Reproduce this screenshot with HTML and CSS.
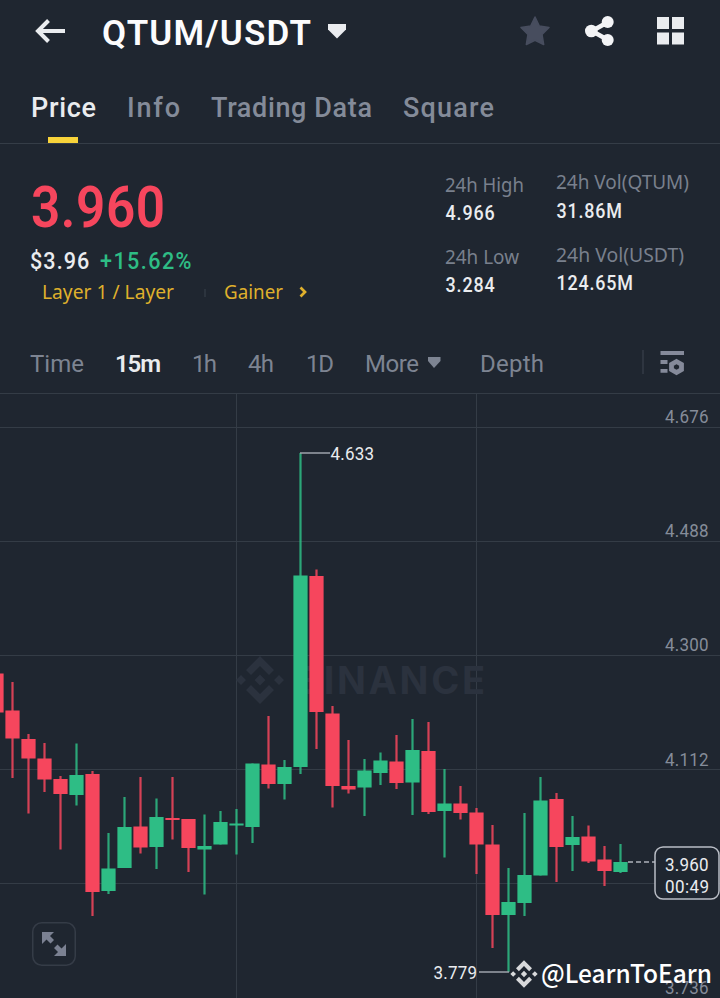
FILE: index.html
```html
<!DOCTYPE html>
<html lang="en">
<head>
<meta charset="utf-8">
<title>QTUM/USDT</title>
<link rel="stylesheet" href="styles.css">
</head>
<body>
<header class="topbar">
  <svg class="back" width="32" height="28" viewBox="0 0 32 28"><path d="M31 14H4M14.500 3.500 4 14l10.500 10.500" fill="none" stroke="#eaecef" stroke-width="4"/></svg>
  <h1 class="pair"><svg width="210" height="50"><text x="0" y="33" textLength="209">QTUM/USDT</text></svg></h1>
  <svg class="caret" width="18" height="15" viewBox="0 0 18 15"><path d="M0 0h18v5.500L9 14.500 0 5.500z" fill="#eaecef"/></svg>
  <svg class="star" width="30" height="32" viewBox="0 0 30 32"><path d="M15 2l4.300 9 9.700 1.400-7 7 1.700 10.100L15 25.300l-8.700 4.200L8 19.400l-7-7L10.700 11z" fill="#474d5e" stroke="#474d5e" stroke-width="1.500" stroke-linejoin="round"/></svg>
  <svg class="share" width="30" height="32" viewBox="0 0 30 32"><path d="M23 7 7 16l16 9" fill="none" stroke="#f3f4f6" stroke-width="4.500"/><circle cx="22.700" cy="7" r="6" fill="#f3f4f6"/><circle cx="6.300" cy="16" r="6.300" fill="#f3f4f6"/><circle cx="22.700" cy="25" r="6" fill="#f3f4f6"/></svg>
  <svg class="grid-icon" width="28" height="28" viewBox="0 0 28 28"><path d="M0 0h12v12H0zM15 0h12v12H15zM0 15.500h12v12H0zM15 15.500h12v12H15z" fill="#eaecef"/></svg>
</header>
<nav class="tabs">
  <svg width="720" height="60">
    <text class="on" x="31" y="32" textLength="65">Price</text>
    <text x="127" y="32" textLength="53">Info</text>
    <text x="211" y="32" textLength="161">Trading Data</text>
    <text x="403" y="32" textLength="91">Square</text>
  </svg>
</nav>
<section class="summary">
  <svg width="720" height="196">
    <text class="price" transform="translate(31 83) scale(.9 1)" textLength="149">3.960</text>
    <text class="usd" transform="translate(30 125) scale(.92 1)" textLength="64.500">$3.96</text>
    <text class="gain" transform="translate(100 125) scale(.92 1)" textLength="99.500">+15.62%</text>
    <text class="tag" x="42" y="155" textLength="132" lengthAdjust="spacingAndGlyphs">Layer 1 / Layer</text>
    <path d="M205 145v8" stroke="#3a424d"/>
    <text class="tag" x="224" y="155" textLength="59" lengthAdjust="spacingAndGlyphs">Gainer</text>
    <path d="M300.500 143.500 305 148l-4.500 4.500" fill="none" stroke="#dfb02c" stroke-width="2.700"/>
    <g class="label">
      <text x="445" y="48" textLength="79" lengthAdjust="spacingAndGlyphs">24h High</text>
      <text x="445" y="120" textLength="74" lengthAdjust="spacingAndGlyphs">24h Low</text>
      <text x="556" y="45" textLength="133" lengthAdjust="spacingAndGlyphs">24h Vol(QTUM)</text>
      <text x="556" y="118" textLength="128" lengthAdjust="spacingAndGlyphs">24h Vol(USDT)</text>
    </g>
    <g class="value">
      <text transform="translate(445.500 76) scale(.92 1)" textLength="53.500">4.966</text>
      <text transform="translate(445.500 148) scale(.92 1)" textLength="53.500">3.284</text>
      <text transform="translate(556.500 74) scale(.92 1)" textLength="71">31.86M</text>
      <text transform="translate(556.500 146) scale(.92 1)" textLength="83">124.65M</text>
    </g>
  </svg>
</section>
<nav class="intervals">
  <svg width="720" height="53">
    <text x="30" y="32" textLength="54">Time</text>
    <text class="on" x="115" y="32" textLength="46">15m</text>
    <text x="192" y="32" textLength="25">1h</text>
    <text x="248" y="32" textLength="26">4h</text>
    <text x="306" y="32" textLength="28">1D</text>
    <text x="365" y="32" textLength="54">More</text>
    <path d="M428 17h12.500v4L434 28l-6-7z" fill="#7d8492"/>
    <text x="480" y="32" textLength="64">Depth</text>
    <path d="M643 10v24" stroke="#343b46" stroke-width="1.500"/>
    <path d="M660.500 11H684v4h-23.500zM660.500 20h7v4h-7zM660.500 29h7v3.700h-7z" fill="#858a9a"/>
    <path d="M676.500 21.500l5 2.800v5.400l-5 2.800-5-2.800v-5.400z" fill="none" stroke="#858a9a" stroke-width="4.800"/>
  </svg>
</nav>
<main>
  <svg class="chart" viewBox="0 393 720 605" width="720" height="605">
    <defs>
      <g id="mark"><path d="M-14-10 0-24l14 14-5 5L0-14-9-5zM-14 10 0 24l14-14-5-5L0 14-9 5zM-24 0l5-5 5 5-5 5zM24 0l-5-5-5 5 5 5zM-5.500 0 0-5.500 5.500 0 0 5.500z"/></g>
    </defs>
    <path class="gridline" d="M0 393.500h720M0 427.500h720M0 541.500h720M0 655.500h720M0 769.500h720M0 883.500h720M236.500 393v605M476.500 393v605"/>
    <g class="watermark"><use href="#mark" x="260" y="680"/><text x="296" y="693.500" textLength="189">BINANCE</text></g>
    <g id="candles"></g>
    <path class="leader" d="M300 453h30M479 972h30"/>
    <path class="last" d="M628 862h27"/>
    <g class="axis">
      <text transform="translate(665 423) scale(.92 1)" textLength="47.500">4.676</text>
      <text transform="translate(665 537) scale(.92 1)" textLength="47.500">4.488</text>
      <text transform="translate(665 651) scale(.92 1)" textLength="47.500">4.300</text>
      <text transform="translate(665 766) scale(.92 1)" textLength="47.500">4.112</text>
      <text transform="translate(665 994) scale(.92 1)" textLength="47.500">3.736</text>
    </g>
    <rect x="655" y="847" width="64" height="52" rx="8" fill="#1f2630" stroke="#b9bdc5" stroke-width="1.500"/>
    <g class="mark-text">
      <text transform="translate(330.500 460) scale(.92 1)" textLength="47.500">4.633</text>
      <text transform="translate(433.500 979) scale(.92 1)" textLength="47.500">3.779</text>
      <text transform="translate(665 871) scale(.92 1)" textLength="47.500">3.960</text>
      <text transform="translate(665 893) scale(.92 1)" textLength="48">00:49</text>
    </g>
    <rect x="32.750" y="922.750" width="42.500" height="42.500" rx="9" fill="none" stroke="#353c47" stroke-width="1.500"/>
    <path d="M42 932h12l-4 4 4 4-3.500 3.500-4-4-4.500 4.500zM66 956H54l4-4-4-4 3.500-3.500 4 4 4.500-4.500z" fill="#7b8192"/>
    <use href="#mark" fill="#d8d9db" transform="translate(524 974) scale(.57)"/>
    <text class="handle" x="541" y="983" textLength="171" lengthAdjust="spacingAndGlyphs">@LearnToEarn</text>
  </svg>
</main>
<script src="chart.js"></script>
</body>
</html>
```
FILE: styles.css
```css
body { margin: 0; width: 720px; height: 998px; overflow: hidden; background: #1f2630; font-family: Roboto, "Liberation Sans", sans-serif; }
svg { display: block; flex: none; overflow: visible; }
.topbar { height: 76px; display: flex; align-items: flex-start; box-sizing: border-box; padding-left: 34px; }
.back { margin-top: 17px; }
.pair { margin: 12px 0 0 36px; font-size: 34px; }
.pair text { fill: #fcfcfd; font: 600 35px Roboto, sans-serif; }
.caret { margin: 24px 0 0 16px; }
.star { margin: 15px 0 0 174px; }
.share { margin: 15px 0 0 35px; }
.grid-icon { margin: 17px 0 0 42px; }
.tabs { height: 68px; position: relative; padding-top: 9px; box-sizing: border-box; border-bottom: 1px solid #353d47; }
.tabs svg { height: 57px; }
.tabs::after { content: ""; position: absolute; left: 48px; bottom: 0; width: 30px; height: 6px; background: #f8d33a; }
.tabs text { fill: #848b99; font: 500 27px Roboto, sans-serif; }
.tabs .on { fill: #eaecef; }
.summary { height: 196px; }
.price { font-size: 57px; font-weight: 600; fill: #f6465d; }
.usd { font-size: 23.500px; font-weight: 500; fill: #eaecef; }
.gain { font-size: 23.500px; font-weight: 500; fill: #2ebd85; }
.tag { font: 20px "Noto Sans", sans-serif; fill: #dfb02c; }
.label { font: 19.500px "Noto Sans", sans-serif; fill: #79808d; }
.value { font-size: 19.500px; font-weight: 500; fill: #eaecef; }
.intervals { height: 53px; }
.intervals text { font-size: 24px; fill: #7d8492; }
.intervals .on { font-weight: 600; fill: #eaecef; }
.gridline { stroke: #343c46; stroke-width: 1; fill: none; }
.watermark { fill: #2b323e; }
.watermark text { font: 700 38px Inter, sans-serif; }
.leader { stroke: #9da3ab; stroke-width: 1.500; }
.last { stroke: #aeb3ba; stroke-width: 1.500; stroke-dasharray: 5 3; }
.axis { fill: #858c99; font-size: 18.500px; }
.mark-text { fill: #eaecef; font-size: 18.500px; }
.up { fill: #2ebd85; }
.down { fill: #f6465d; }
.wick { opacity: .85; }
.handle { fill: #fff; font: 500 25.500px "Noto Sans CJK SC", sans-serif; }
```
FILE: chart.js
```js
// Each candle: direction, wick top, wick bottom, body top, body bottom
const candles = [
  ["d",673.5,712.5,673.5,712.5],["d",682,778,710.5,738.5],["d",734,813.5,739,758.5],["d",743,792,758.5,779.5],
  ["d",776,849.5,779,794],["u",743.5,805.5,775,795],["d",771,916,774,892],["u",833,894,868.5,891],
  ["u",797,868,827,868],["d",777,853.5,826.5,847.5],["u",798.5,869,817,847],["d",777,839.5,818,820],
  ["d",819,872,819,848],["u",814.5,894.5,846,849.5],["u",811,844.5,822,844.5],["u",809,854.5,823.5,825.5],
  ["u",763.5,843,763.5,827],["d",716,788.5,764.5,784],["u",760,799.5,767,784],["u",453,774,575.5,767],
  ["d",569.5,749,576,712],["d",706,807.5,713.5,786],["d",740,793.5,786,789.5],["u",759,816,770.5,787.5],
  ["u",752.5,785,760.5,773],["d",735,789,761.5,783],["u",719,815,750,782.5],["d",722,814,751,812],
  ["u",769,857.5,803.5,811],["d",786,819.5,803.5,813],["d",808,874,812.5,844.5],["d",825,948,844.5,915],
  ["u",868,972,902,915],["u",813,916,875,903],["u",777,875.5,800.5,875.5],["d",793,882,799,847],
  ["u",816,871,837,845],["d",825.5,863,836.5,861.5],["d",846,886,859.5,871],["u",844,873,862,872]
];
const group = document.getElementById("candles");
function bar(x, y, width, height, cls) {
  const r = document.createElementNS("http://www.w3.org/2000/svg", "rect");
  r.setAttribute("x", x);
  r.setAttribute("y", y);
  r.setAttribute("width", width);
  r.setAttribute("height", height);
  r.setAttribute("class", cls);
  group.appendChild(r);
}
candles.forEach(([dir, high, low, top, bottom], i) => {
  const x = -3.5 + i * 16;
  const cls = dir === "u" ? "up" : "down";
  bar(x - 1.1, high, 2.2, low - high, cls + " wick");
  bar(x - 7.1, top, 14.2, bottom - top, cls);
});
```
